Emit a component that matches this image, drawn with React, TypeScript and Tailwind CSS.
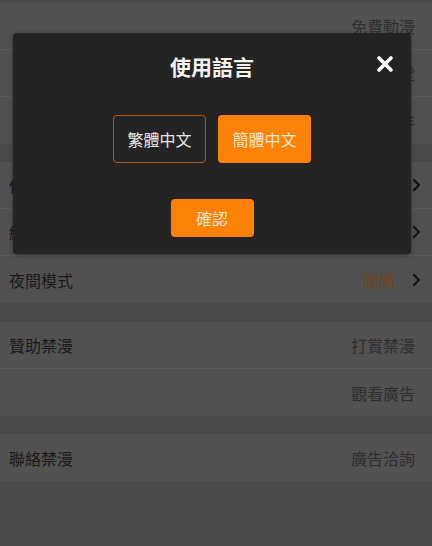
import React from "react";

const Chevron = () => (
  <svg width="9" height="14" viewBox="0 0 9 14" className="shrink-0">
    <path d="M2 2 L7 7 L2 12" fill="none" stroke="#141414" strokeWidth="2.4" strokeLinecap="round" strokeLinejoin="round" />
  </svg>
);

type RowProps = { left?: string; right?: string; rightClass?: string; chevron?: boolean; border?: boolean };

const Row = ({ left = "", right = "", rightClass = "text-[#303030]", chevron = false, border = false }: RowProps) => (
  <div className={`flex h-[47px] items-center bg-[#515151] pl-[9px] ${chevron ? "pr-[11px]" : "pr-[17px]"} ${border ? "border-b border-[#5a5a5a]" : ""}`}>
    <span className="flex-1 text-[16px] text-[#1a1a1a]">{left}</span>
    <span className={`text-[16px] ${rightClass}`}>{right}</span>
    {chevron && <span className="ml-[17px] flex items-center"><Chevron /></span>}
  </div>
);

export default function App() {
  return (
    <div
      className="relative h-[546px] w-[432px] overflow-hidden bg-[#4a4a4a]"
      style={{ fontFamily: '"Noto Sans CJK TC", "Noto Sans", sans-serif' }}
    >
      <div className="flex flex-col pt-[3px]">
        <Row right="免費動漫" border />
        <Row right="禁漫天堂" border />
        <Row right="清除暫存" />
        <div className="h-[18px]" />
        <Row left="使用語言" chevron border />
        <Row left="線路切換" chevron border />
        <Row left="夜間模式" right="關閉" rightClass="text-[#6e4722]" chevron />
        <div className="h-[19px]" />
        <Row left="贊助禁漫" right="打賞禁漫" border />
        <Row right="觀看廣告" />
        <div className="h-[18px]" />
        <Row left="聯絡禁漫" right="廣告洽詢" />
      </div>

      <div className="absolute left-[13px] top-[33px] flex h-[221px] w-[398px] flex-col items-center rounded-[4px] bg-[#242424] shadow-[0_1px_4px_rgba(0,0,0,0.4)]">
        <div className="relative flex w-full justify-center pt-[19px]">
          <span className="text-[21px] font-bold leading-[28px] text-[#f2f2f2]">使用語言</span>
          <svg className="absolute right-[17px] top-[22px]" width="18" height="18" viewBox="0 0 18 18">
            <path d="M3 3 L15 15 M15 3 L3 15" stroke="#ffffff" strokeWidth="3.6" strokeLinecap="round" />
          </svg>
        </div>
        <div className="mt-[35px] flex gap-[12px]">
          <button className="flex h-[48px] w-[93px] items-center justify-center rounded-[4px] border border-[#a85a1c] bg-transparent text-[16px] text-[#e6e6e6]">
            繁體中文
          </button>
          <button className="flex h-[48px] w-[93px] items-center justify-center rounded-[4px] bg-[#ff8208] text-[16px] text-[#fbe3c6]">
            簡體中文
          </button>
        </div>
        <button className="mt-[36px] flex h-[38px] w-[83px] items-center justify-center rounded-[4px] bg-[#ff8208] text-[16px] text-[#fbe3c6]">
          確認
        </button>
      </div>
    </div>
  );
}
